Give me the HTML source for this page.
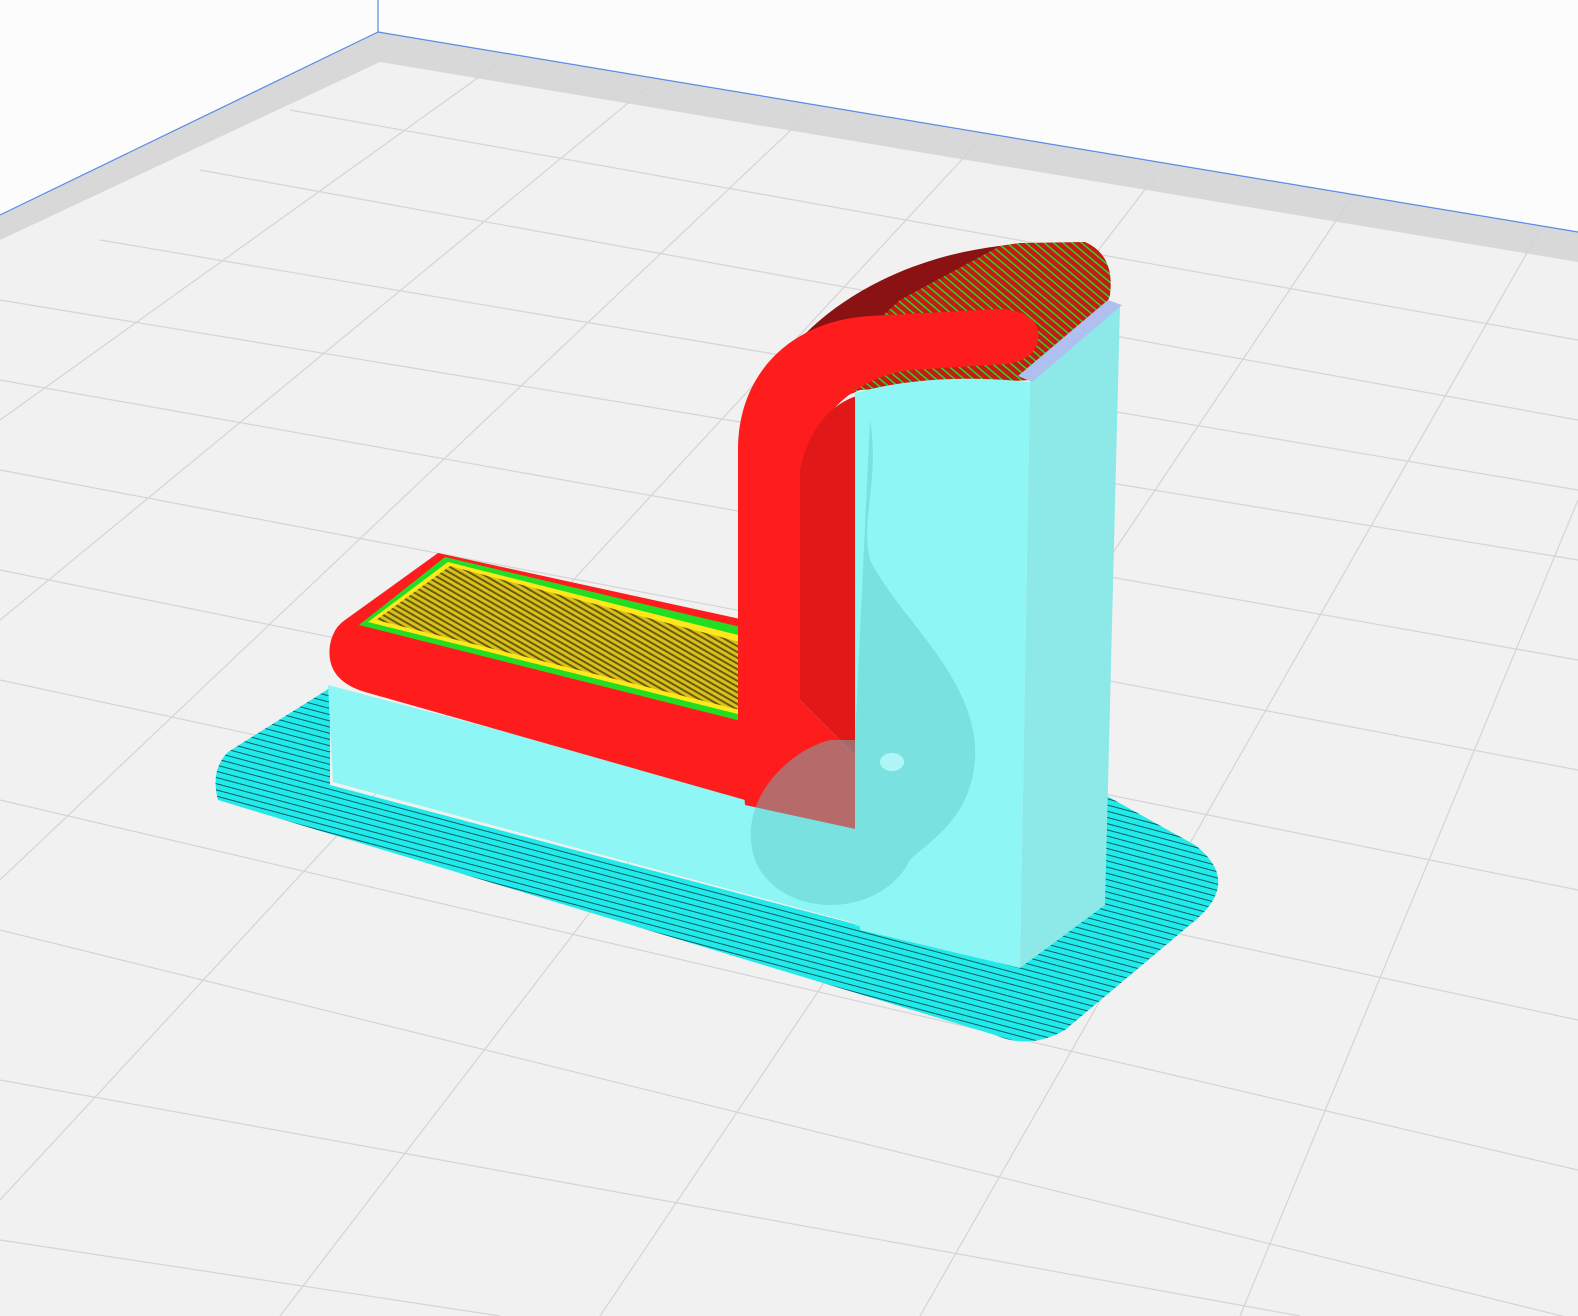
<!DOCTYPE html>
<html><head><meta charset="utf-8"><style>
html,body{margin:0;padding:0;background:#fcfcfc;overflow:hidden}
svg{display:block}
</style></head><body>
<svg width="1578" height="1316" viewBox="0 0 1578 1316" xmlns="http://www.w3.org/2000/svg">
<defs>
<pattern id="brim" width="6" height="6" patternUnits="userSpaceOnUse" patternTransform="rotate(15)">
<rect width="6" height="6" fill="#22eaea"/><rect y="4.5" width="6" height="1" fill="#0a5c60"/>
</pattern>
<pattern id="yel" width="5" height="5" patternUnits="userSpaceOnUse" patternTransform="rotate(-60)">
<rect width="5" height="5" fill="#d8c21a"/><rect x="3" width="2" height="5" fill="#6a5a10"/>
</pattern>
<pattern id="grn" width="6" height="6" patternUnits="userSpaceOnUse" patternTransform="rotate(-50)">
<rect width="6" height="6" fill="#c81818"/><rect x="4.5" width="1.5" height="6" fill="#22dd22"/>
</pattern>
</defs>
<rect width="1578" height="1316" fill="#fcfcfc"/>
<polygon points="378,32 1578,232 1578,1316 0,1316 0,215" fill="#f1f1f1"/>
<polygon points="378,32 1578,232 1578,262 380,62 0,240 0,215" fill="#d8d8d8"/>
<g stroke="#d4d4d4" stroke-width="1.2" fill="none">
<line x1="0" y1="300" x2="1578" y2="560"/><line x1="0" y1="380" x2="1578" y2="660"/>
<line x1="0" y1="470" x2="1578" y2="770"/><line x1="0" y1="570" x2="1578" y2="890"/>
<line x1="0" y1="680" x2="1578" y2="1020"/><line x1="0" y1="800" x2="1578" y2="1170"/>
<line x1="0" y1="930" x2="1578" y2="1320"/><line x1="0" y1="1080" x2="1300" y2="1316"/>
<line x1="0" y1="1240" x2="500" y2="1316"/>
<line x1="100" y1="240" x2="1578" y2="490"/><line x1="200" y1="170" x2="1578" y2="420"/>
<line x1="290" y1="110" x2="1578" y2="340"/>
<line x1="500" y1="62" x2="0" y2="420"/><line x1="650" y1="85" x2="0" y2="620"/>
<line x1="810" y1="112" x2="0" y2="880"/><line x1="980" y1="140" x2="0" y2="1200"/>
<line x1="1160" y1="170" x2="280" y2="1316"/><line x1="1350" y1="200" x2="600" y2="1316"/>
<line x1="1540" y1="230" x2="920" y2="1316"/><line x1="1578" y1="500" x2="1240" y2="1316"/>
</g>
<line x1="378" y1="32" x2="1578" y2="232" stroke="#5a8be8" stroke-width="1.2"/>
<line x1="378" y1="32" x2="0" y2="215" stroke="#5a8be8" stroke-width="1.2"/>
<line x1="378" y1="0" x2="378" y2="32" stroke="#5a8be8" stroke-width="1.2"/>
<path d="M330,688 L228,752 Q210,770 218,800 L995,1035 Q1030,1050 1065,1030 L1198,918 Q1240,880 1195,845 L1105,795 L1020,968 L330,785 Z" fill="url(#brim)"/>
<polygon points="328,685 745,795 860,830 860,930 1020,968 333,782" fill="#8ef6f4"/>
<path d="M345,620 L438,553 L745,620 L745,800 L365,692 Q325,680 330,645 Q333,628 345,620 Z" fill="#ff1c1c"/>
<polygon points="445,557 359,625 745,722 745,628" fill="#22dd22"/>
<polygon points="448,562 368,622 742,715 742,636" fill="#ffe81a"/>
<polygon points="450,566 376,620 740,710 740,642" fill="url(#yel)"/>
<path d="M745,440 C770,330 880,260 1020,243 L1085,242 Q1115,255 1110,295 L1105,310 L1030,380 L860,390 Z" fill="url(#grn)"/>
<path d="M745,440 C770,330 880,260 1000,246 L900,300 Z" fill="#8a1212"/>
<path d="M738,720 L738,450 C738,370 795,320 870,316 L1000,309 Q1042,312 1038,340 Q1035,360 1005,364 L910,370 C870,375 830,400 815,440 L800,480 L800,700 L860,760 L860,830 L745,805 Z" fill="#ff1c1c"/>
<path d="M800,470 C810,420 840,400 860,395 L860,760 L800,700 Z" fill="#e01818"/>
<polygon points="1030,382 1120,305 1105,905 1020,968" fill="#8ce9e8"/>
<polygon points="1018,376 1108,300 1122,305 1032,382" fill="#b0c0ee"/>
<path d="M855,393 Q930,372 1030,382 L1020,968 L855,925 Z" fill="#8ef6f4"/>
<path d="M870,420 C880,480 860,520 870,560 C900,620 980,680 975,760 C970,820 930,840 910,860 C880,920 780,920 755,860 C735,800 790,750 830,740 L855,740 Z" fill="#5fcaca" opacity="0.45"/>
<ellipse cx="892" cy="762" rx="12" ry="9" fill="#c8ffff" opacity="0.7"/>
</svg>
</body></html>
